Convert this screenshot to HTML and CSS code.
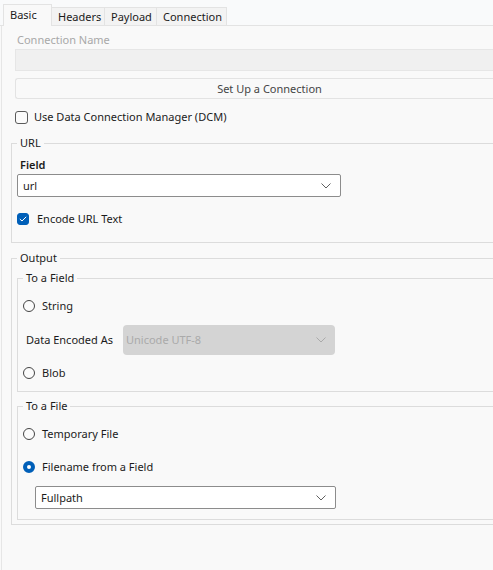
FILE: index.html
```html
<!DOCTYPE html>
<html lang="en">
<head>
<meta charset="UTF-8">
<meta name="viewport" content="width=device-width, initial-scale=1.0">
<title>Download Tool</title>
<link rel="stylesheet" href="styles.css">
</head>
<body>

<!-- Tabs -->
<div class="tabbar">
  <div class="tab active">Basic</div>
  <div class="tab tab-headers">Headers</div>
  <div class="tab tab-payload">Payload</div>
  <div class="tab tab-connection">Connection</div>
</div>

<div class="panel">
  <div class="label disabled-label">Connection Name</div>
  <div class="text-input disabled"></div>
  <div class="button">Set Up a Connection</div>

  <div class="check-row top-check">
    <span class="checkbox"></span>
    <span>Use Data Connection Manager (DCM)</span>
  </div>

  <!-- URL -->
  <fieldset class="group url-group">
    <legend>URL</legend>
    <div class="label field-label">Field</div>
    <div class="select url-select">
      <span>url</span>
      <svg class="chevron" width="10" height="6" viewBox="0 0 10 6"><path d="M0.5 0.5 L5 5 L9.5 0.5" fill="none" stroke="#606060" stroke-width="1"/></svg>
    </div>
    <div class="check-row encode-row">
      <span class="checkbox checked">
        <svg width="8" height="6" viewBox="0 0 8 6"><path d="M0.8 3 L3 5 L7.2 0.8" fill="none" stroke="#fff" stroke-width="1"/></svg>
      </span>
      <span>Encode URL Text</span>
    </div>
  </fieldset>

  <!-- Output -->
  <fieldset class="group output-group">
    <legend>Output</legend>

    <fieldset class="group inner field-group">
      <legend>To a Field</legend>
      <div class="radio-row string-row">
        <span class="radio"></span>
        <span>String</span>
      </div>
      <div class="encoded-row">
        <span class="encoded-label">Data Encoded As</span>
        <div class="select locked">
          <span>Unicode UTF-8</span>
          <svg class="chevron" width="10" height="6" viewBox="0 0 10 6"><path d="M0.5 0.5 L5 5 L9.5 0.5" fill="none" stroke="#aaaaaa" stroke-width="1"/></svg>
        </div>
      </div>
      <div class="radio-row blob-row">
        <span class="radio"></span>
        <span>Blob</span>
      </div>
    </fieldset>

    <fieldset class="group inner file-group">
      <legend>To a File</legend>
      <div class="radio-row temp-row">
        <span class="radio"></span>
        <span>Temporary File</span>
      </div>
      <div class="radio-row fromfield-row">
        <span class="radio checked"></span>
        <span>Filename from a Field</span>
      </div>
      <div class="select path-select">
        <span>Fullpath</span>
        <svg class="chevron" width="10" height="6" viewBox="0 0 10 6"><path d="M0.5 0.5 L5 5 L9.5 0.5" fill="none" stroke="#606060" stroke-width="1"/></svg>
      </div>
    </fieldset>
  </fieldset>
</div>

</body>
</html>
```

FILE: styles.css
```css
* { box-sizing: border-box; }
html, body { height: 100%; }
body { margin: 0; background: #f9f9f9; color: #1b1b1b; font-family: "Noto Sans", "Open Sans", sans-serif; font-size: 11px; line-height: 16px; overflow: hidden; }

/* tabs */
.tabbar { display: flex; align-items: flex-end; height: 26px; padding-left: 3px; background: #f9fafb; border-bottom: 1px solid #e3e3e3; }
.tab { height: 19px; margin-bottom: -1px; padding: 1px 0 0 6px; background: #f3f3f3; border: 1px solid #e3e3e3; border-left: none; }
.tab.active { width: 49px; height: 22px; padding-top: 2px; background: #f9f9f9; border-left: 1px solid #e3e3e3; border-bottom: none; }
.tab-headers { width: 53px; }
.tab-payload { width: 52px; }
.tab-connection { width: 70px; }

/* main panel */
.panel { height: calc(100% - 26px); margin-left: 1px; padding: 6px 0 0 9px; border-left: 1px solid #e6e6e6; }
.label { height: 16px; }
.disabled-label { margin-left: 6px; color: #a8a8a8; }
.text-input { height: 22px; margin: 1px 0 0 4px; }
.text-input.disabled { background: #f0f0f0; border: 1px solid #e6e6e6; border-right: none; }
.button { height: 21px; margin: 7px 0 0 4px; padding-top: 2px; padding-left: 30px; text-align: center; color: #454545; border: 1px solid #e3e3e3; border-right: none; border-radius: 3px 0 0 3px; }

.check-row, .radio-row { display: flex; align-items: center; height: 16px; }
.top-check { margin: 10px 0 0 4px; }
.checkbox { display: flex; align-items: center; justify-content: center; width: 13px; height: 13px; margin-right: 6px; border: 1px solid #5a5a5a; border-radius: 3px; background: #fbfbfb; }
.checkbox.checked { width: 12px; height: 12px; margin-right: 8px; background: #005fb8; border-color: #005fb8; }

/* group boxes */
.group { margin: 10px 0 0 0; padding: 0 0 15px 5px; border: 1px solid #dcdcdc; border-right: none; min-width: 0; }
.group legend { padding: 0 3px; height: 16px; }
.field-label { margin: 6px 0 0 3px; font-weight: 600; }

.select { display: flex; align-items: center; justify-content: space-between; height: 23px; padding: 0 9px 0 5px; background: #fff; border: 1px solid #8c8c8c; border-radius: 2px; }
.url-select { width: 324px; margin-top: 1px; }
.encode-row { margin-top: 14px; }

.output-group { margin-top: 7px; padding-bottom: 4px; }
.inner { margin-top: 4px; padding-bottom: 10px; }
.file-group { margin-top: 6px; }

.radio { width: 12px; height: 12px; margin-right: 7px; border: 1px solid #444; border-radius: 50%; background: #fbfbfb; }
.radio.checked { border: 4px solid #005fb8; background: #fff; }
.string-row { margin-top: 12px; }
.blob-row { margin-top: 10px; }
.temp-row { margin-top: 12px; }
.fromfield-row { margin-top: 17px; }

.encoded-row { display: flex; align-items: center; margin: 11px 0 0 3px; }
.encoded-label { width: 97px; }
.select.locked { width: 212px; height: 30px; padding-left: 3px; color: #aaaaaa; background: #d4d4d4; border: none; border-radius: 4px; }
.path-select { width: 301px; margin: 11px 0 0 12px; }
```
